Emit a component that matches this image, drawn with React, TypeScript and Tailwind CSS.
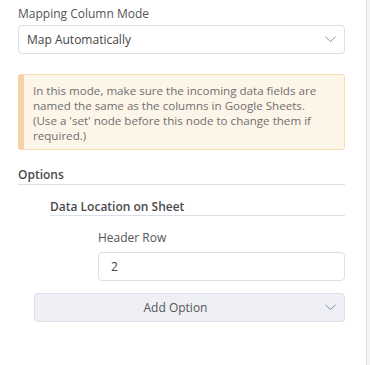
import React from "react";

function Chevron() {
  return (
    <svg width="11" height="7" viewBox="0 0 11 7" fill="none">
      <path d="M0.5 0.8 L5.5 5.6 L10.5 0.8" stroke="#8a8f99" strokeWidth="1" />
    </svg>
  );
}

export default function App() {
  return (
    <div
      className="w-[370px] h-[365px] bg-white flex text-[#555]"
      style={{ fontFamily: '"Open Sans", sans-serif' }}
    >
      <div className="flex-1 pl-[18px] pr-[21px] pt-[5px] flex flex-col">
        <div className="text-[12px] leading-[17px]">Mapping Column Mode</div>
        <div className="mt-[3px] h-[29px] rounded-[4px] border border-[#dbdfe7] flex items-center justify-between pl-[8px] pr-[8px] text-[12px] text-[#444]">
          <span>Map Automatically</span>
          <Chevron />
        </div>
        <div className="mt-[20px] rounded-[3px] border border-[#f7dcb5] border-l-[6px] border-l-[#f5d3a9] bg-[#fef5e9] pl-[9px] pr-[14px] pt-[8px] pb-[6px] text-[11.6px] leading-[15px] text-[#6f6f6f]">
          In this mode, make sure the incoming data fields are named the same as the columns in Google Sheets. (Use a 'set' node before this node to change them if required.)
        </div>
        <div className="mt-[16px] text-[12px] font-semibold text-[#4a4a4a] border-b border-[#dbdfe7] leading-[18px]">
          Options
        </div>
        <div className="ml-[32px] mt-[14px] text-[12px] font-semibold text-[#4a4a4a] border-b border-[#dbdfe7] leading-[16px]">
          Data Location on Sheet
        </div>
        <div className="ml-[80px] mt-[14px] text-[12px] leading-[16px]">Header Row</div>
        <div className="ml-[80px] mt-[6px] h-[29px] rounded-[4px] border border-[#dbdfe7] flex items-center pl-[12px] text-[12px] text-[#444]">
          2
        </div>
        <div className="ml-[16px] mt-[12px] h-[29px] rounded-[4px] border border-[#dbdfe7] bg-[#eef0f6] flex items-center text-[12px] text-[#555]">
          <span className="flex-1 text-center">Add Option</span>
          <span className="w-[28px] flex justify-center"><Chevron /></span>
        </div>
      </div>
      <div className="w-[4px] border-l border-[#dcdcdc] bg-[#f4f4f4]" />
    </div>
  );
}
